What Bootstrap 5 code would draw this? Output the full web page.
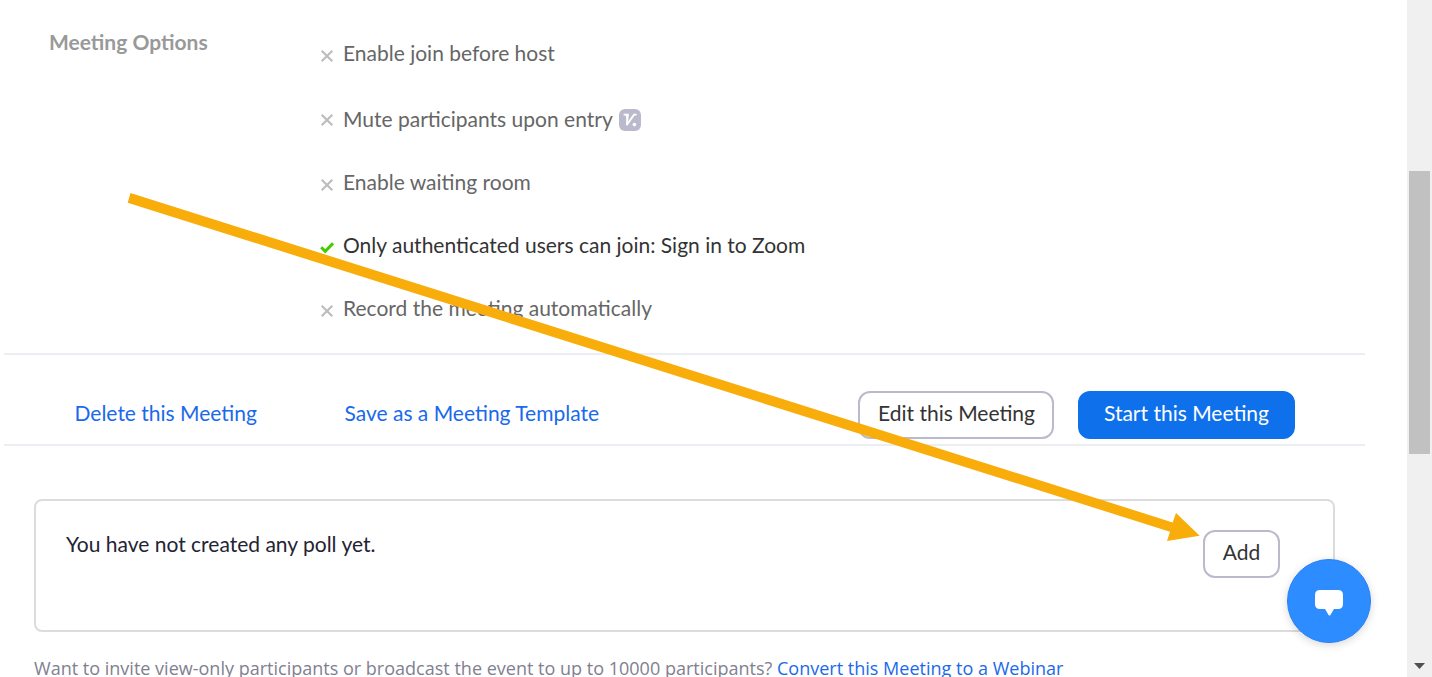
<!DOCTYPE html>
<html lang="en">
<head>
<meta charset="utf-8">
<meta name="viewport" content="width=device-width, initial-scale=1">
<title>Meeting details</title>
<link href="https://cdn.jsdelivr.net/npm/bootstrap@5.3.0/dist/css/bootstrap.min.css" rel="stylesheet">
<style>
body { font-family: Lato, "Liberation Sans", sans-serif; font-size: 21px; line-height: 30px; color: #232333; background: #fff; }
a { color: #1a69ec; text-decoration: none; }
.page { height: 677px; }
.section-label { width: 314px; padding: 27px 0 0 49px; font-weight: 700; color: #999; }
.options { padding-top: 38px; height: 353px; }
.option { height: 30px; margin-bottom: 33px; color: #666; white-space: nowrap; }
.option:first-child { margin-bottom: 36px; }
.option.on { color: #333; }
.option .state { width: 14px; height: 14px; margin: 6px 9.5px 0 5.5px; }
.option.tagged .state { margin-top: 1px; }
.plan-tag { margin: 1px 0 0 6px; }
.actions { margin-left: 4px; width: 1361px; height: 93px; padding: 36px 70px 0 70.5px; border-top: 2px solid #ededf4; border-bottom: 2px solid #ededf4; white-space: nowrap; }
.actions a { line-height: 44px; }
.delete-link { width: 270px; }
.btn { font-size: 21px; line-height: 40px; height: 48px; padding: 0 0 4px; border-width: 2px; border-radius: 12px; }
.btn-line { border-color: #babacc; color: #333; background: #fff; }
.btn-start { background: #0e71eb; border-color: #0e71eb; color: #fff; width: 217px; }
.btn-edit { width: 196px; margin-right: 24px; padding-left: 1px; }
.btn-add { width: 77px; margin-top: 1px; }
.poll { margin: 53px 0 0 34px; width: 1301px; height: 133px; padding: 28px 53px 0 30px; border: 2px solid #dcdcdc; border-radius: 8px; }
.webinar { margin: 21px 0 0 34px; font-family: "Open Sans", "Noto Sans", sans-serif; font-size: 18.02px; color: #808090; white-space: nowrap; }
.scroll-track { width: 25px; background: #f0f0f0; padding: 171px 2px 0; }
.scroll-thumb { width: 21px; height: 283px; background: #c1c1c1; }
.scroll-down { left: 7px; bottom: 8px; }
.chat { right: 61px; top: 559px; width: 84px; height: 84px; background: #2d8cff; border: 1px solid #2681f2; box-shadow: 0 2px 8px rgba(0,0,0,.16); }
.pointer-arrow { left: 0; top: 0; pointer-events: none; }
</style>
</head>
<body class="overflow-hidden">
<div class="page d-flex position-relative overflow-hidden">
  <main class="flex-grow-1">
    <section class="d-flex">
      <div class="section-label flex-shrink-0">Meeting Options</div>
      <div class="options">
        <div class="option d-flex align-items-center"><svg class="state" viewBox="0 0 14 14"><path d="M1.7 1.7l10.6 10.6M12.3 1.7L1.7 12.3" stroke="#bdbdbd" stroke-width="2.2"/></svg><span>Enable join before host</span></div>
        <div class="option tagged d-flex align-items-center"><svg class="state" viewBox="0 0 14 14"><path d="M1.7 1.7l10.6 10.6M12.3 1.7L1.7 12.3" stroke="#bdbdbd" stroke-width="2.2"/></svg><span>Mute participants upon entry</span>
          <svg class="plan-tag" width="22" height="22" viewBox="0 0 22 22"><rect width="22" height="22" rx="6" fill="#babacc"/><path d="M4.6 5.6h4.2L7.8 16M7.6 16.3L15 5.6h2.6" fill="none" stroke="#fff" stroke-width="1.9"/><path d="M6.6 6h2.6L8.4 14z" fill="#fff"/><circle cx="15.4" cy="15.6" r="1.8" fill="#fff"/></svg></div>
        <div class="option d-flex align-items-center"><svg class="state" viewBox="0 0 14 14"><path d="M1.7 1.7l10.6 10.6M12.3 1.7L1.7 12.3" stroke="#bdbdbd" stroke-width="2.2"/></svg><span>Enable waiting room</span></div>
        <div class="option on d-flex align-items-center"><svg class="state" viewBox="0 0 14 14"><path d="M1.2 6.3l4 4L13 2.3" fill="none" stroke="#4c0" stroke-width="3"/></svg><span>Only authenticated users can join: Sign in to Zoom</span></div>
        <div class="option d-flex align-items-center"><svg class="state" viewBox="0 0 14 14"><path d="M1.7 1.7l10.6 10.6M12.3 1.7L1.7 12.3" stroke="#bdbdbd" stroke-width="2.2"/></svg><span>Record the meeting automatically</span></div>
      </div>
    </section>
    <section class="actions d-flex">
      <a class="delete-link" href="#">Delete this Meeting</a>
      <a class="me-auto" href="#">Save as a Meeting Template</a>
      <button class="btn btn-line btn-edit" type="button">Edit this Meeting</button>
      <button class="btn btn-start" type="button">Start this Meeting</button>
    </section>
    <section class="poll d-flex justify-content-between align-items-start">
      <span>You have not created any poll yet.</span>
      <button class="btn btn-line btn-add" type="button">Add</button>
    </section>
    <p class="webinar">Want to invite view-only participants or broadcast the event to up to 10000 participants? <a href="#">Convert this Meeting to a Webinar</a></p>
  </main>
  <div class="scroll-track position-relative flex-shrink-0">
    <div class="scroll-thumb"></div>
    <svg class="scroll-down position-absolute" width="11" height="6" viewBox="0 0 11 6"><path d="M0 0h11L5.5 6z" fill="#505050"/></svg>
  </div>
  <div class="chat position-absolute rounded-circle">
    <svg class="d-block" width="82" height="82" viewBox="0 0 82 82"><path d="M32 30h18q5 0 5 5v9q0 5-5 5h-4l-3.6 6q-.9 1-1.8 0L37 49h-5q-5 0-5-5v-9q0-5 5-5z" fill="#fff"/></svg>
  </div>
  <svg class="pointer-arrow position-absolute" width="1432" height="677" viewBox="0 0 1432 677"><path d="M130.5 193L1172.7 522.4l3.3-9.4 23.7 22.7L1167 541l3-9.3L127.7 202.7z" fill="#f8ad0b"/></svg>
</div>
<script src="https://cdn.jsdelivr.net/npm/bootstrap@5.3.0/dist/js/bootstrap.bundle.min.js"></script>
</body>
</html>
